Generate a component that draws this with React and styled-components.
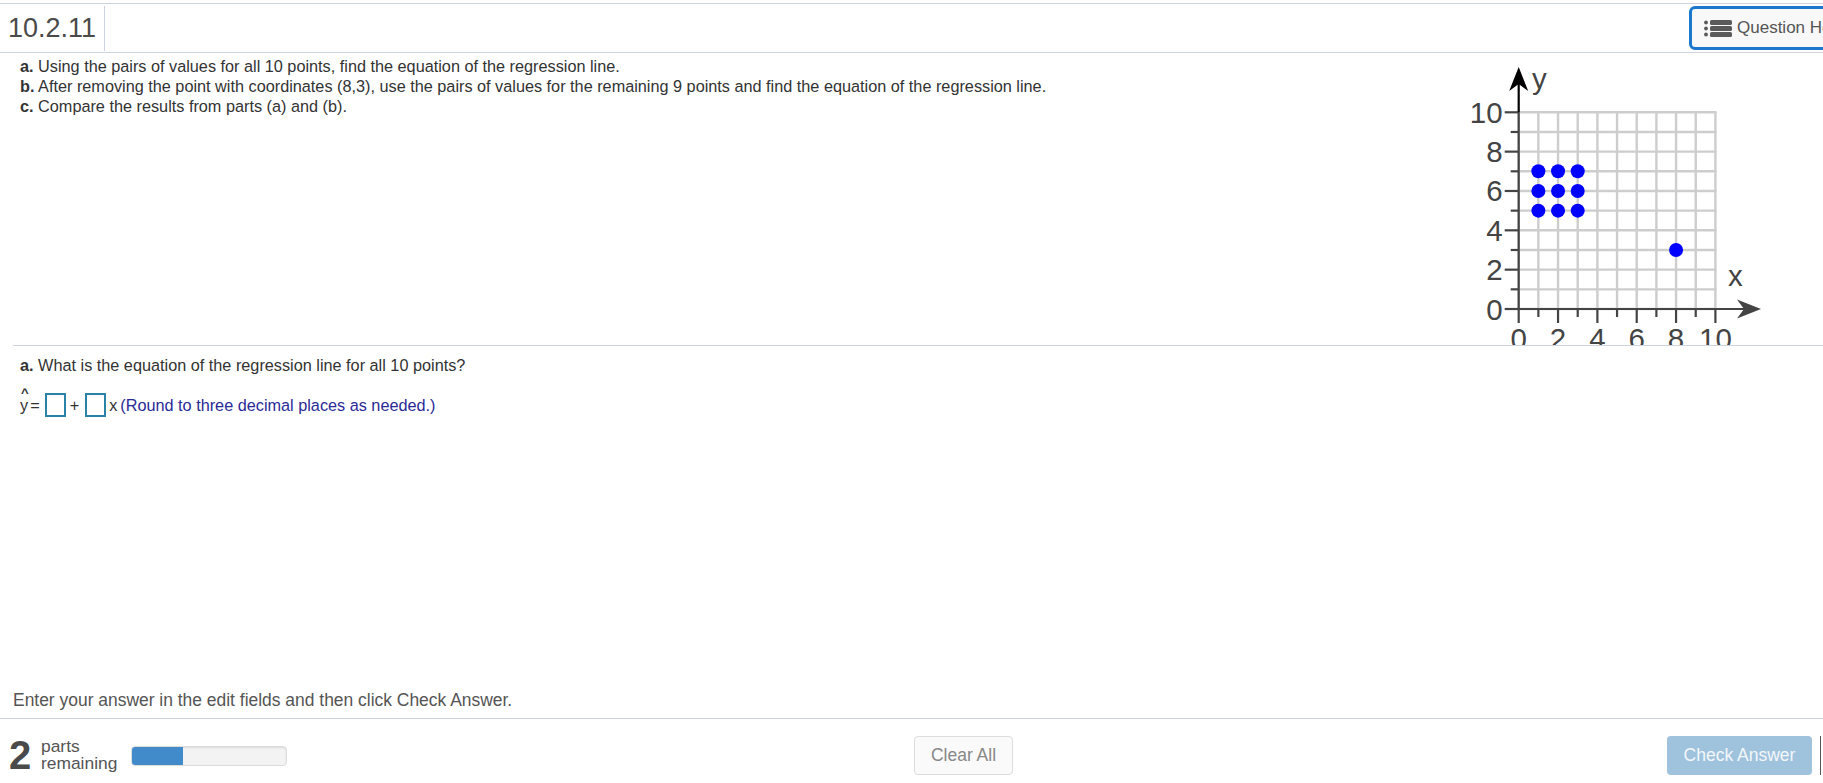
import React from 'react';
import styled, {createGlobalStyle} from 'styled-components';

const originX = 1518.7;
const originY = 309;
const unit = 19.67;
const px = (v) => originX - 1450 + v * unit;
const py = (v) => originY - 53 - v * unit;
const range = Array.from({length: 11}, (_, i) => i);
const points = [[1, 7], [2, 7], [3, 7], [1, 6], [2, 6], [3, 6], [1, 5], [2, 5], [3, 5], [8, 3]];

function ListIcon() {
  return (
    <svg width="28" height="17" viewBox="0 0 28 17">
      <g fill="#5a5a5a">
        <circle cx="2" cy="2.5" r="1.9" />
        <circle cx="2" cy="8.5" r="1.9" />
        <circle cx="2" cy="14.5" r="1.9" />
        <rect x="6" y="0" width="22" height="5" rx="1.6" />
        <rect x="6" y="6" width="22" height="5" rx="1.6" />
        <rect x="6" y="12" width="22" height="5" rx="1.6" />
      </g>
    </svg>
  );
}

function Graph() {
  return (
    <GraphSvg viewBox="0 0 330 292">
      <g stroke="#cdcdcd" strokeWidth="2.4" strokeLinecap="round">
        {range.map((i) => (
          <line key={'v' + i} x1={px(i)} y1={py(0)} x2={px(i)} y2={py(10)} />
        ))}
        {range.map((i) => (
          <line key={'h' + i} x1={px(0)} y1={py(i)} x2={px(10)} y2={py(i)} />
        ))}
      </g>
      <g stroke="#444" strokeWidth="2.2">
        {range.map((i) => (
          <line key={'ty' + i} x1={px(0) - (i % 2 ? 8 : 14)} y1={py(i)} x2={px(0)} y2={py(i)} />
        ))}
        {range.map((i) => (
          <line key={'tx' + i} x1={px(i)} y1={py(0)} x2={px(i)} y2={py(0) + (i % 2 ? 8 : 14)} />
        ))}
        <line x1={px(0)} y1={py(0)} x2={px(0)} y2={py(10)} />
        <line x1={px(0)} y1={py(0)} x2="298" y2={py(0)} />
      </g>
      <line x1={px(0)} y1={py(10)} x2={px(0)} y2="30" stroke="#000" strokeWidth="2.2" />
      <path d="M68.7 14 L78.2 38 L68.7 31 L59.2 38 Z" fill="#000" />
      <path d="M311 256 L287 246.5 L294 256 L287 265.5 Z" fill="#444" />
      <g fill="#444" fontFamily="'Liberation Sans', Arial, sans-serif" fontSize="29.5">
        {range.filter((i) => i % 2 === 0).map((i) => (
          <text key={'ly' + i} x={px(0) - 16} y={py(i) + 10.5} textAnchor="end">{i}</text>
        ))}
        {range.filter((i) => i % 2 === 0).map((i) => (
          <text key={'lx' + i} x={px(i)} y={py(0) + 40} textAnchor="middle">{i}</text>
        ))}
        <text x="82" y="36">y</text>
        <text x="278" y="233">x</text>
      </g>
      <g fill="#0000ff">
        {points.map(([x, y]) => (
          <circle key={x + '-' + y} cx={px(x)} cy={py(y)} r="7" />
        ))}
      </g>
    </GraphSvg>
  );
}

export default function App() {
  return (
    <Page>
      <GlobalStyle />
      <Header>
        <Title>10.2.11</Title>
        <QuestionHelp>
          <ListIcon />
          Question Help
        </QuestionHelp>
      </Header>
      <Stem>
        <StemText>
          <p><b>a.</b> Using the pairs of values for all 10 points, find the equation of the regression line.</p>
          <p><b>b.</b> After removing the point with coordinates (8,3), use the pairs of values for the remaining 9 points and find the equation of the regression line.</p>
          <p><b>c.</b> Compare the results from parts (a) and (b).</p>
        </StemText>
        <Graph />
      </Stem>
      <Answer>
        <Prompt><b>a.</b> What is the equation of the regression line for all 10 points?</Prompt>
        <Equation>
          <YHat>y</YHat>
          <Sign>=</Sign>
          <Blank />
          <Sign>+</Sign>
          <Blank />
          <Sign>x</Sign>
          <Note>(Round to three decimal places as needed.)</Note>
        </Equation>
      </Answer>
      <Hint>Enter your answer in the edit fields and then click Check Answer.</Hint>
      <Footer>
        <PartsCount>2</PartsCount>
        <PartsLabel>parts<br />remaining</PartsLabel>
        <Progress><ProgressFill style={{width: (1 / 3 * 100) + '%'}} /></Progress>
        <ClearButton>Clear All</ClearButton>
        <CheckButton>Check Answer</CheckButton>
        <Divider />
      </Footer>
    </Page>
  );
}

const GlobalStyle = createGlobalStyle`
  html, body {
    margin: 0;
    padding: 0;
    background: #fff;
    overflow: hidden;
  }
  * {
    box-sizing: border-box;
  }
`;

const Page = styled.div`
  display: flex;
  flex-direction: column;
  width: 1823px;
  height: 783px;
  overflow: hidden;
  font-family: 'Liberation Sans', Arial, sans-serif;
  color: #444;
`;

const Header = styled.div`
  display: flex;
  align-items: center;
  justify-content: space-between;
  flex: none;
  height: 50px;
  margin-top: 3px;
  border-top: 1px solid #cdd3e0;
  border-bottom: 1px solid #cdd3e0;
`;

const Title = styled.div`
  display: flex;
  align-items: center;
  width: 105px;
  height: 45px;
  padding-left: 8px;
  border-right: 1px solid #cdd3e0;
  font-size: 27px;
  color: #4a4a4a;
`;

const QuestionHelp = styled.div`
  display: flex;
  align-items: center;
  flex: none;
  gap: 5px;
  width: 180px;
  height: 44px;
  margin-right: -46px;
  padding-left: 12px;
  border: 3px solid #1b78cc;
  border-radius: 6px;
  background: #f8f8f8;
  font-size: 17px;
  color: #555;
  white-space: nowrap;
`;

const Stem = styled.div`
  display: flex;
  justify-content: space-between;
  flex: none;
  height: 292px;
  padding-left: 20px;
  overflow: hidden;
`;

const StemText = styled.div`
  padding-top: 3px;
  font-size: 16.25px;
  line-height: 20px;
  color: #333;

  p {
    margin: 0;
  }
`;

const GraphSvg = styled.svg`
  flex: none;
  width: 330px;
  height: 292px;
  margin-right: 43px;
`;

const Answer = styled.div`
  flex: 1;
  margin-left: 13px;
  padding: 9px 0 0 7px;
  border-top: 1px solid #cdd3e0;
  font-size: 16.25px;
  color: #333;
`;

const Prompt = styled.div`
  line-height: 20px;
`;

const Equation = styled.div`
  display: flex;
  align-items: center;
  height: 24px;
  margin-top: 18px;
`;

const YHat = styled.span`
  position: relative;

  &::before {
    content: '^';
    position: absolute;
    top: -11px;
    left: 1px;
    font-size: 13px;
    font-weight: bold;
  }
`;

const Sign = styled.span`
  margin: 0 2px;
`;

const Blank = styled.span`
  width: 21px;
  height: 24px;
  margin: 0 1.5px 0 3.5px;
  border: 2px solid #2a82a6;
`;

const Note = styled.span`
  margin-left: 1px;
  color: #2a2a96;
`;

const Hint = styled.div`
  flex: none;
  height: 33px;
  padding: 3px 0 0 13px;
  border-bottom: 1px solid #cdd3e0;
  font-size: 17.45px;
  line-height: 22px;
  color: #555;
`;

const Footer = styled.div`
  display: flex;
  align-items: center;
  flex: none;
  height: 64px;
  padding: 9px 2px 0 9px;
`;

const PartsCount = styled.div`
  width: 32px;
  font-size: 40px;
  font-weight: bold;
  color: #4a4a4a;
`;

const PartsLabel = styled.div`
  width: 90px;
  margin-top: -2px;
  font-size: 17.4px;
  line-height: 17px;
  color: #555;
`;

const Progress = styled.div`
  width: 156px;
  height: 20px;
  border: 1px solid #ddd;
  border-radius: 4px;
  background: #f3f3f3;
  box-shadow: inset 0 1px 2px rgba(0, 0, 0, 0.1);
  overflow: hidden;
`;

const ProgressFill = styled.div`
  height: 100%;
  background: #428bca;
`;

const ClearButton = styled.div`
  display: flex;
  align-items: center;
  justify-content: center;
  width: 99px;
  height: 39px;
  margin-left: 627px;
  border: 1px solid #ddd;
  border-radius: 4px;
  background: #fafafa;
  font-size: 17.5px;
  color: #888;
`;

const CheckButton = styled.div`
  display: flex;
  align-items: center;
  justify-content: center;
  width: 145px;
  height: 39px;
  margin-left: auto;
  border-radius: 4px;
  background: #9fc2dd;
  font-size: 17.5px;
  color: #f3f7fa;
`;

const Divider = styled.div`
  width: 1px;
  height: 39px;
  margin-left: 8px;
  background: #555;
`;
